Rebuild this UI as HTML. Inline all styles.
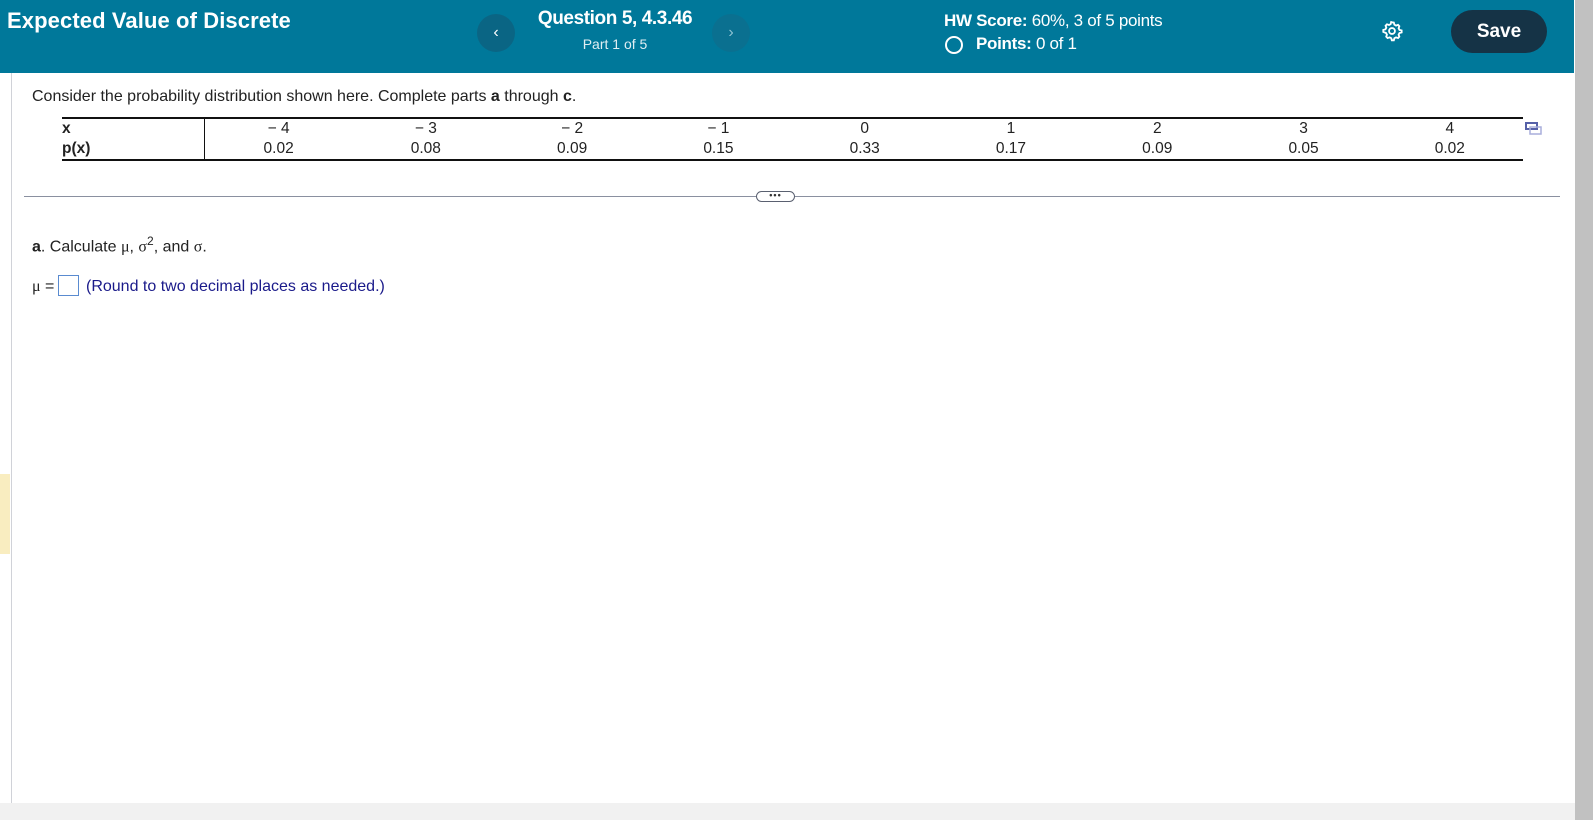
<!DOCTYPE html>
<html><head><meta charset="utf-8"><style>
*{margin:0;padding:0;box-sizing:border-box}
body{width:1593px;height:820px;background:#fff;font-family:"Liberation Sans",Arial,sans-serif;position:relative;overflow:hidden;color:#222}
.hdr{position:absolute;left:0;top:0;width:1574px;height:73px;background:#00789a;color:#fff}
.abs{position:absolute}
.sb{position:absolute;left:1575px;top:0;width:18px;height:820px;background:#c1c1c1}
.bot{position:absolute;left:0;top:803px;width:1575px;height:17px;background:#f1f1f1}
.lb{position:absolute;left:11px;top:73px;width:1px;height:730px;background:#d0d2d8}
.yl{position:absolute;left:0;top:474px;width:10px;height:80px;background:#f9edc0}
table{position:absolute;left:62px;top:117px;width:1461px;border-collapse:collapse;font-size:15.5px;border-top:2px solid #111;border-bottom:2px solid #111}
td{text-align:center;height:21px;line-height:20px;padding:0}
td.h{text-align:left;font-weight:bold;width:142px;border-right:1.5px solid #111}
</style></head><body>
<div class="hdr">
<div class="abs" style="left:7px;top:8px;font-size:22px;font-weight:bold;letter-spacing:0.1px">Expected Value of Discrete</div>
<div class="abs" style="left:477px;top:14px;width:38px;height:38px;border-radius:50%;background:#0a6584;text-align:center;line-height:38px;font-size:16px">‹</div>
<div class="abs" style="left:520px;top:8px;width:190px;text-align:center;font-size:19px;font-weight:bold;letter-spacing:-0.4px">Question 5, 4.3.46</div>
<div class="abs" style="left:520px;top:36px;width:190px;text-align:center;font-size:14px;color:#e0eef3">Part 1 of 5</div>
<div class="abs" style="left:712px;top:14px;width:38px;height:38px;border-radius:50%;background:#0a7090;text-align:center;line-height:38px;font-size:16px;color:#8fc3d3">›</div>
<div class="abs" style="left:944px;top:11px;font-size:17px;letter-spacing:-0.3px"><b>HW Score:</b> 60%, 3 of 5 points</div>
<div class="abs" style="left:945px;top:36px;width:18px;height:18px;border:2px solid #fff;border-radius:50%"></div>
<div class="abs" style="left:976px;top:34px;font-size:17px;letter-spacing:-0.3px"><b>Points:</b> 0 of 1</div>
<svg class="abs" style="left:1381px;top:20px" width="22" height="22" viewBox="0 0 24 24" fill="none" stroke="#fff" stroke-width="2"><circle cx="12" cy="12" r="3.2"/><path d="M12 2.5l2 .3.6 2.3 1.8 1 2.2-.8 1.4 1.5-.8 2.2 1 1.8 2.3.6v2.2l-2.3.6-1 1.8.8 2.2-1.4 1.5-2.2-.8-1.8 1-.6 2.3h-2.2l-.6-2.3-1.8-1-2.2.8-1.5-1.5.8-2.2-1-1.8L2.5 13v-2.2l2.3-.6 1-1.8-.8-2.2L6.5 4.7l2.2.8 1.8-1 .6-2.3z"/></svg>
<div class="abs" style="left:1451px;top:10px;width:96px;height:43px;border-radius:22px;background:#153346;text-align:center;line-height:43px;font-size:19px;font-weight:bold">Save</div>
</div>
<div class="sb"></div><div class="bot"></div><div class="lb"></div><div class="yl"></div>
<div class="abs" style="left:32px;top:88px;font-size:16px">Consider the probability distribution shown here. Complete parts <b>a</b> through <b>c</b>.</div>
<table>
<tr><td class="h">x</td><td>− 4</td><td>− 3</td><td>− 2</td><td>− 1</td><td>0</td><td>1</td><td>2</td><td>3</td><td>4</td></tr>
<tr><td class="h">p(x)</td><td>0.02</td><td>0.08</td><td>0.09</td><td>0.15</td><td>0.33</td><td>0.17</td><td>0.09</td><td>0.05</td><td>0.02</td></tr>
</table>
<svg class="abs" style="left:1525px;top:122px" width="17" height="13"><rect x="1" y="1" width="11" height="6" fill="none" stroke="#5560a8" stroke-width="2"/><rect x="5" y="5" width="11" height="7" fill="none" stroke="#a8aedb" stroke-width="1.5"/></svg>
<div class="abs" style="left:24px;top:196px;width:1536px;height:1px;background:#8a90a0"></div>
<div class="abs" style="left:756px;top:191px;width:39px;height:11px;border:1.5px solid #5a6070;border-radius:6px;background:#fff;text-align:center;font-size:9px;line-height:6px;letter-spacing:1px;color:#333;font-weight:bold">•••</div>
<div class="abs" style="left:32px;top:234px;font-size:16px"><b>a</b>. Calculate <span style="font-family:'Liberation Serif',serif">μ</span>, <span style="font-family:'Liberation Serif',serif">σ</span><sup style="font-size:12px">2</sup>, and <span style="font-family:'Liberation Serif',serif">σ</span>.</div>
<div class="abs" style="left:32px;top:278px;font-size:16px"><span style="font-family:'Liberation Serif',serif">μ</span> =</div>
<div class="abs" style="left:58px;top:275px;width:21px;height:21px;border:1px solid #5a8bd0"></div>
<div class="abs" style="left:86px;top:278px;font-size:16px;color:#1a1a8a">(Round to two decimal places as needed.)</div>
</body></html>
